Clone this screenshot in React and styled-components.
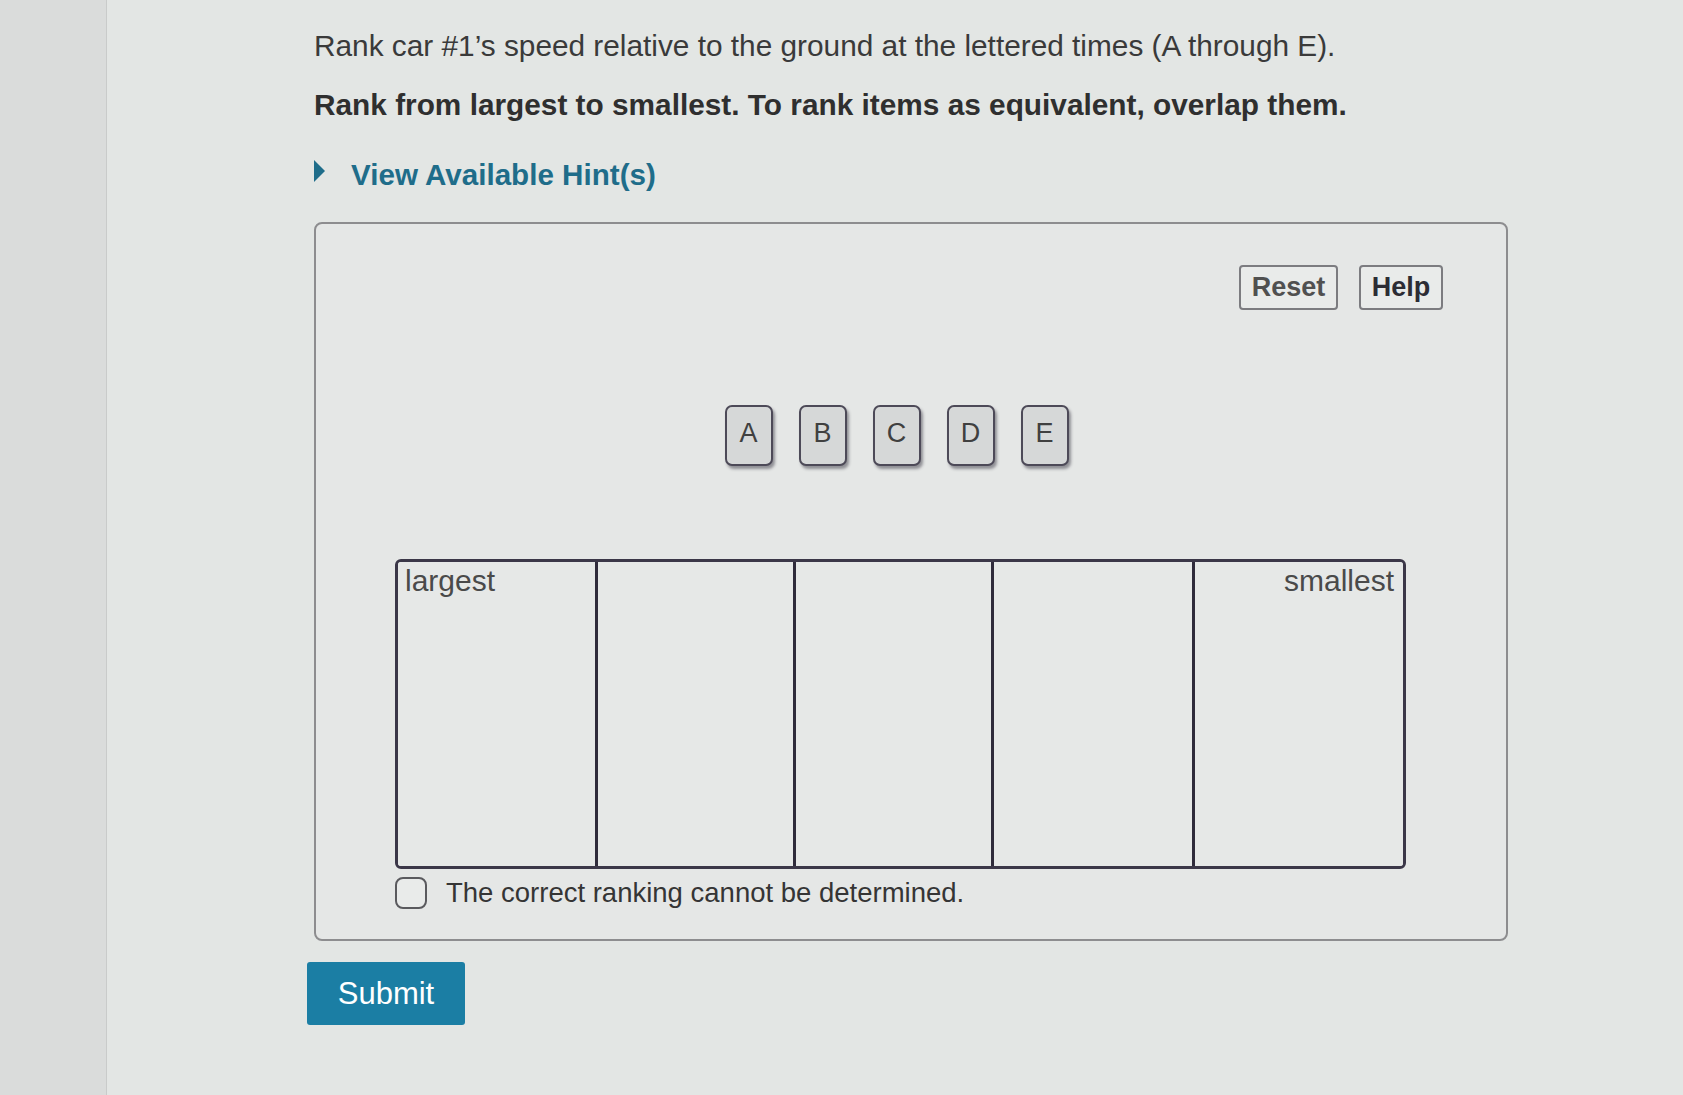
import styled, { createGlobalStyle } from 'styled-components';

const GlobalStyle = createGlobalStyle`
	html, body {
		margin: 0;
		padding: 0;
		background: #e3e6e4;
	}
	body {
		font-family: "Liberation Sans", Arial, sans-serif;
		color: #383838;
	}
`;

const Page = styled.div`
	display: flex;
	min-height: 1095px;
	width: 1683px;
	overflow: hidden;
`;

const Sidebar = styled.div`
	width: 106px;
	flex-shrink: 0;
	background: #dadcdb;
	border-right: 1px solid #c9cbca;
`;

const Main = styled.div`
	display: flex;
	flex-direction: column;
	padding: 28px 0 0 207px;
`;

const Prompt = styled.p`
	margin: 0;
	font-size: 29.8px;
	line-height: 35px;
	font-weight: ${(p) => (p.$bold ? 700 : 400)};
	color: ${(p) => (p.$bold ? '#2f2f2f' : '#3a3a3a')};
	margin-bottom: ${(p) => p.$gap || 0}px;
`;

const HintToggle = styled.div`
	display: flex;
	align-items: center;
	gap: 26px;
	font-size: 29.6px;
	line-height: 35px;
	font-weight: 700;
	color: #1f6d8a;
	margin-bottom: 30px;
`;

const Caret = styled.span`
	width: 0;
	height: 0;
	border-top: 11px solid transparent;
	border-bottom: 11px solid transparent;
	border-left: 11px solid #1f6d8a;
	margin-top: -8px;
`;

const Panel = styled.div`
	width: 1194px;
	box-sizing: border-box;
	border: 2px solid #8d8d8f;
	border-radius: 8px;
	background: #e5e7e6;
	padding: 41px 63px 30px 79px;
	display: flex;
	flex-direction: column;
`;

const Toolbar = styled.div`
	display: flex;
	justify-content: flex-end;
	gap: 21px;
`;

const ToolButton = styled.button`
	height: 45px;
	width: ${(p) => p.$w}px;
	box-sizing: border-box;
	border: 2px solid #7c7c80;
	border-radius: 4px;
	background: #e9ebea;
	font-family: "Liberation Sans", Arial, sans-serif;
	font-size: 27px;
	font-weight: 700;
	color: ${(p) => p.$color};
	padding: 0;
	cursor: pointer;
`;

const Board = styled.div`
	width: 1011px;
	display: flex;
	flex-direction: column;
`;

const TileRow = styled.div`
	display: flex;
	justify-content: center;
	gap: 26px;
	margin: 95px 8px 93px 0;
`;

const Tile = styled.div`
	width: 48px;
	height: 61px;
	box-sizing: border-box;
	border: 2px solid #4d4a58;
	border-radius: 7px;
	background: #d6d8d8;
	box-shadow: 2px 3px 3px rgba(40, 38, 50, 0.45);
	display: flex;
	align-items: center;
	justify-content: center;
	font-size: 27px;
	color: #404040;
	padding-bottom: 4px;
`;

const RankTable = styled.div`
	display: grid;
	grid-template-columns: 1fr 1fr 1.005fr 1.015fr 1.07fr;
	height: 310px;
	box-sizing: border-box;
	border: 3px solid #3b3748;
	border-radius: 6px;
	overflow: hidden;
`;

const RankCell = styled.div`
	border-left: ${(p) => (p.$first ? 'none' : '3px solid #2f2b3b')};
	padding: 1px 9px 0 7px;
	font-size: 30px;
	line-height: 36px;
	color: #4a4a4a;
	text-align: ${(p) => p.$align || 'left'};
	background: #e6e8e7;
`;

const CheckRow = styled.label`
	display: flex;
	align-items: center;
	gap: 19px;
	margin-top: 8px;
	font-size: 27.5px;
	color: #353535;
`;

const CheckBox = styled.span`
	width: 32px;
	height: 32px;
	box-sizing: border-box;
	border: 2.5px solid #5a5a5e;
	border-radius: 8px;
	background: #e9ebea;
	flex-shrink: 0;
`;

const SubmitButton = styled.button`
	margin: 21px 0 0 -7px;
	width: 158px;
	height: 63px;
	border: none;
	border-radius: 3px;
	background: #1b7ea4;
	color: #ffffff;
	font-family: "Liberation Sans", Arial, sans-serif;
	font-size: 31px;
	cursor: pointer;
	align-self: flex-start;
`;

const letters = ['A', 'B', 'C', 'D', 'E'];

export default function App() {
	return (
		<>
			<GlobalStyle />
			<Page>
				<Sidebar />
				<Main>
					<Prompt $gap={24}>
						Rank car #1’s speed relative to the ground at the lettered times (A through E).
					</Prompt>
					<Prompt $bold $gap={35}>
						Rank from largest to smallest. To rank items as equivalent, overlap them.
					</Prompt>
					<HintToggle>
						<Caret />
						View Available Hint(s)
					</HintToggle>
					<Panel>
						<Toolbar>
							<ToolButton $w={99} $color="#505050">Reset</ToolButton>
							<ToolButton $w={84} $color="#2c2c34">Help</ToolButton>
						</Toolbar>
						<Board>
							<TileRow>
								{letters.map((l) => (
									<Tile key={l}>{l}</Tile>
								))}
							</TileRow>
							<RankTable>
								<RankCell $first>largest</RankCell>
								<RankCell />
								<RankCell />
								<RankCell />
								<RankCell $align="right">smallest</RankCell>
							</RankTable>
						</Board>
						<CheckRow>
							<CheckBox />
							The correct ranking cannot be determined.
						</CheckRow>
					</Panel>
					<SubmitButton>Submit</SubmitButton>
				</Main>
			</Page>
		</>
	);
}
